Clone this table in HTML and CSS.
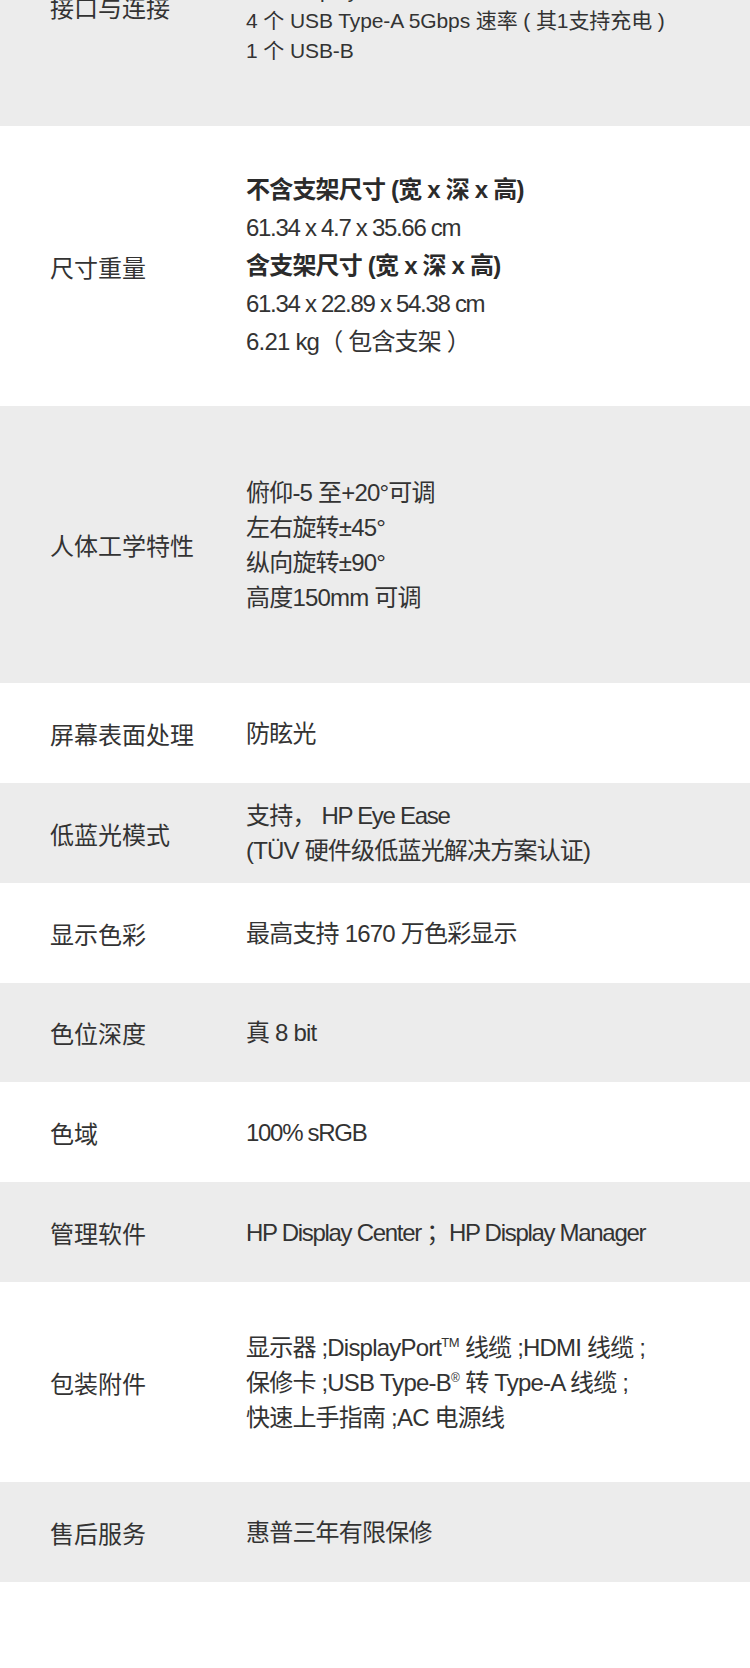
FILE: index.html
```html
<!DOCTYPE html>
<html lang="zh-CN">
<head>
<meta charset="utf-8">
<title>规格参数</title>
<link rel="stylesheet" href="styles.css">
</head>
<body>
<main class="specs">
  <div class="row row--gray row--ports">
    <div class="label">接口与连接</div>
    <div class="value value--small">
      <p>1 个 HDMI 1.4</p>
      <p>1 个 DisplayPort™ 1.2</p>
      <p>4 个 USB Type-A 5Gbps 速率 ( 其1支持充电 )</p>
      <p>1 个 USB-B</p>
    </div>
  </div>
  <div class="row row--size">
    <div class="label">尺寸重量</div>
    <div class="value value--loose">
      <p class="strong">不含支架尺寸 (宽 x 深 x 高)</p>
      <p class="tight">61.34 x 4.7 x 35.66 cm</p>
      <p class="strong">含支架尺寸 (宽 x 深 x 高)</p>
      <p class="tight">61.34 x 22.89 x 54.38 cm</p>
      <p>6.21 kg（ 包含支架 ）</p>
    </div>
  </div>
  <div class="row row--gray row--ergo">
    <div class="label">人体工学特性</div>
    <div class="value">
      <p>俯仰-5 至+20°可调</p>
      <p>左右旋转±45°</p>
      <p>纵向旋转±90°</p>
      <p>高度150mm 可调</p>
    </div>
  </div>
  <div class="row row--single">
    <div class="label">屏幕表面处理</div>
    <div class="value"><p>防眩光</p></div>
  </div>
  <div class="row row--gray row--single">
    <div class="label">低蓝光模式</div>
    <div class="value">
      <p>支持， <span class="tight">HP Eye Ease</span></p>
      <p>(TÜV 硬件级低蓝光解决方案认证)</p>
    </div>
  </div>
  <div class="row row--single">
    <div class="label">显示色彩</div>
    <div class="value"><p>最高支持 1670 万色彩显示</p></div>
  </div>
  <div class="row row--gray row--single row--short">
    <div class="label">色位深度</div>
    <div class="value"><p>真 8 bit</p></div>
  </div>
  <div class="row row--single">
    <div class="label">色域</div>
    <div class="value"><p class="tight">100% sRGB</p></div>
  </div>
  <div class="row row--gray row--single">
    <div class="label">管理软件</div>
    <div class="value"><p class="tight">HP Display Center ；HP Display Manager</p></div>
  </div>
  <div class="row row--double">
    <div class="label">包装附件</div>
    <div class="value">
      <p>显示器 ;DisplayPort<sup class="mark">TM</sup> 线缆 ;HDMI 线缆 ;</p>
      <p>保修卡 ;USB Type-B<sup class="mark mark--reg">®</sup> 转 Type-A 线缆 ;</p>
      <p>快速上手指南 ;AC 电源线</p>
    </div>
  </div>
  <div class="row row--gray row--single">
    <div class="label">售后服务</div>
    <div class="value"><p>惠普三年有限保修</p></div>
  </div>
</main>
</body>
</html>
```

FILE: styles.css
```css
* {
  box-sizing: border-box;
}

html, body {
  margin: 0;
  padding: 0;
  background: #ffffff;
}

body {
  width: 750px;
  height: 1668px;
  overflow: hidden;
  color: #333333;
  font-family: "Liberation Sans", "Noto Sans CJK SC", sans-serif;
}

.specs {
  display: flex;
  flex-direction: column;
}

.row {
  display: grid;
  grid-template-columns: 196px 1fr;
  align-items: center;
  padding-left: 50px;
  background: #ffffff;
}

.row--gray {
  background: #ececec;
}

.row--ports {
  height: 240px;
  margin-top: -114px;
}

.row--size {
  height: 280px;
}

.row--ergo {
  height: 277px;
}

.row--single {
  height: 100px;
}

.row--short {
  height: 99px;
}

.row--double {
  height: 200px;
}

.label {
  font-family: "Noto Sans CJK SC", sans-serif;
  font-size: 24px;
  line-height: 35px;
  color: #333333;
}

.value {
  font-size: 24px;
  line-height: 35px;
  letter-spacing: -0.8px;
  white-space: nowrap;
}

.value p {
  margin: 0;
}

.value .tight {
  letter-spacing: -1.3px;
}

.value--small {
  font-size: 21px;
  line-height: 30px;
  letter-spacing: -0.1px;
}

.value--loose {
  line-height: 38px;
}

.strong {
  font-weight: 700;
  color: #2b2b2b;
}

.mark {
  font-size: 13px;
  line-height: 0;
  vertical-align: 9px;
  letter-spacing: -0.5px;
}

.mark--reg {
  font-size: 12px;
  vertical-align: 9px;
}
```
